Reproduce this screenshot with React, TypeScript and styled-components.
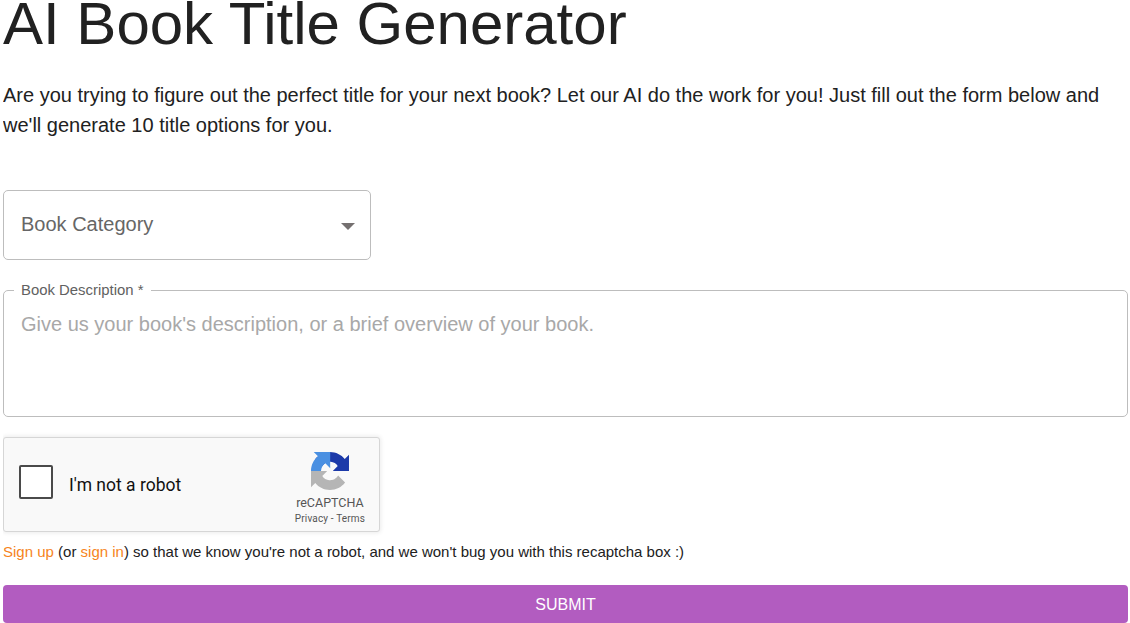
import React from 'react';
import styled, { createGlobalStyle } from 'styled-components';

const Global = createGlobalStyle`
	html, body {
		margin: 0;
		padding: 0;
		background: #fff;
		overflow: hidden;
	}
	body {
		font-family: 'Liberation Sans', Arial, sans-serif;
		color: #212121;
	}
`;

const Page = styled.main`
	width: 1125px;
	height: 623px;
	margin-left: 3px;
	overflow: hidden;
`;

const Title = styled.h1`
	margin: -12px 0 0;
	font: 400 60px/72px 'Liberation Sans', sans-serif;
	color: #212121;
`;

const Intro = styled.p`
	margin: 20px 0 0;
	font: 400 20px/30px 'Liberation Sans', sans-serif;
	color: #212121;
`;

const SelectBox = styled.div`
	box-sizing: border-box;
	width: 368px;
	height: 70px;
	margin-top: 50px;
	padding: 0 15px 2px 17px;
	display: flex;
	align-items: center;
	justify-content: space-between;
	border: 1px solid #bdbdbd;
	border-radius: 5px;
	font: 400 20px 'Liberation Sans', sans-serif;
	color: #666;
`;

const Caret = styled.span`
	width: 0;
	height: 0;
	margin-top: 4px;
	border-left: 7px solid transparent;
	border-right: 7px solid transparent;
	border-top: 7px solid #757070;
`;

const Field = styled.fieldset`
	box-sizing: border-box;
	height: 136px;
	margin: 21px 0 0;
	padding: 0 17px;
	border: 1px solid #bdbdbd;
	border-radius: 5px;
`;

const Legend = styled.legend`
	padding: 0 7px;
	margin-left: -7px;
	font: 400 14.9px/18px 'Liberation Sans', sans-serif;
	color: #616161;
`;

const Placeholder = styled.div`
	margin-top: 13px;
	font: 400 20px/24px 'Liberation Sans', sans-serif;
	color: #a8a8a8;
`;

const Captcha = styled.div`
	box-sizing: border-box;
	width: 377px;
	height: 95px;
	margin-top: 20px;
	padding: 0 14px 0 15px;
	display: flex;
	align-items: center;
	background: #f9f9f9;
	border: 1px solid #d6d6d6;
	border-radius: 3px;
	box-shadow: 0 0 4px 1px rgba(0, 0, 0, 0.08);
`;

const Check = styled.span`
	box-sizing: border-box;
	width: 34px;
	height: 34px;
	margin-bottom: 5px;
	background: #fff;
	border: 2.5px solid #4a4a4a;
	border-radius: 2px;
`;

const Robot = styled.span`
	margin-left: 16px;
	flex: 1;
	font: 400 17.5px Roboto, sans-serif;
	color: #111;
`;

const Badge = styled.div`
	display: flex;
	flex-direction: column;
	align-items: center;
	margin-top: 9px;
`;

const BadgeName = styled.span`
	margin-top: 5px;
	font: 400 12.5px/16px Roboto, sans-serif;
	color: #555;
`;

const BadgeLinks = styled.span`
	margin-top: 1px;
	font: 400 10px/14px Roboto, sans-serif;
	letter-spacing: 0.15px;
	color: #555;
`;

const Note = styled.p`
	margin: 11px 0 0;
	font: 400 15px/18px 'Liberation Sans', sans-serif;
	color: #212121;
`;

const Link = styled.a`
	color: #f6841c;
	text-decoration: none;
`;

const Submit = styled.button`
	display: block;
	width: 100%;
	height: 38px;
	margin-top: 24px;
	padding: 2px 0 0;
	border: 0;
	border-radius: 4px;
	background: #b25cc0;
	color: #fff;
	font: 400 16px 'Liberation Sans', sans-serif;
	text-transform: uppercase;
`;

const CaptchaLogo = () => (
	<svg width="38" height="38" viewBox="0 0 64 64">
		<path
			fill="#1c3aa9"
			d="M64 31.955l-.033-1.37V4.687l-7.16 7.16C50.948 4.674 42.033.093 32.05.093c-10.4 0-19.622 4.96-25.458 12.64l11.736 11.86a15.55 15.55 0 0 1 4.754-5.334c2.05-1.6 4.952-2.906 8.968-2.906.485 0 .86.057 1.135.163 4.976.393 9.288 3.14 11.828 7.124l-8.307 8.307c10.522-.04 22.4-.066 27.295.006"
		/>
		<path
			fill="#4a90e2"
			d="M31.862.094l-1.37.033H4.594l7.16 7.16C4.58 13.147 0 22.06 0 32.046l16.824-.046c0-.485.057-.86.163-1.135.393-4.976 3.14-9.288 7.124-11.828l8.307 8.307c-.04-10.522-.066-22.4.006-27.295"
		/>
		<path
			fill="#b5b5b5"
			d="M.001 32.045l.033 1.37v25.898l7.16-7.16c5.86 7.173 14.774 11.754 24.76 11.754 10.4 0 19.622-4.96 25.458-12.64L45.677 39.407a15.55 15.55 0 0 1-4.754 5.334c-2.05 1.6-4.952 2.906-8.968 2.906-.485 0-.86-.057-1.135-.163-4.976-.393-9.288-3.14-11.828-7.124l8.307-8.307c-10.522.04-22.4.066-27.295-.006"
		/>
	</svg>
);

export default function App() {
	return (
		<>
			<Global />
			<Page>
				<Title>AI Book Title Generator</Title>
				<Intro>
					Are you trying to figure out the perfect title for your next book? Let our AI do the work for you! Just fill out the form below and we'll generate 10 title options for you.
				</Intro>
				<SelectBox>
					Book Category
					<Caret />
				</SelectBox>
				<Field>
					<Legend>Book Description *</Legend>
					<Placeholder>Give us your book's description, or a brief overview of your book.</Placeholder>
				</Field>
				<Captcha>
					<Check />
					<Robot>I'm not a robot</Robot>
					<Badge>
						<CaptchaLogo />
						<BadgeName>reCAPTCHA</BadgeName>
						<BadgeLinks>Privacy - Terms</BadgeLinks>
					</Badge>
				</Captcha>
				<Note>
					<Link href="#">Sign up</Link> (or <Link href="#">sign in</Link>) so that we know you're not a robot, and we won't bug you with this recaptcha box :)
				</Note>
				<Submit>Submit</Submit>
			</Page>
		</>
	);
}
